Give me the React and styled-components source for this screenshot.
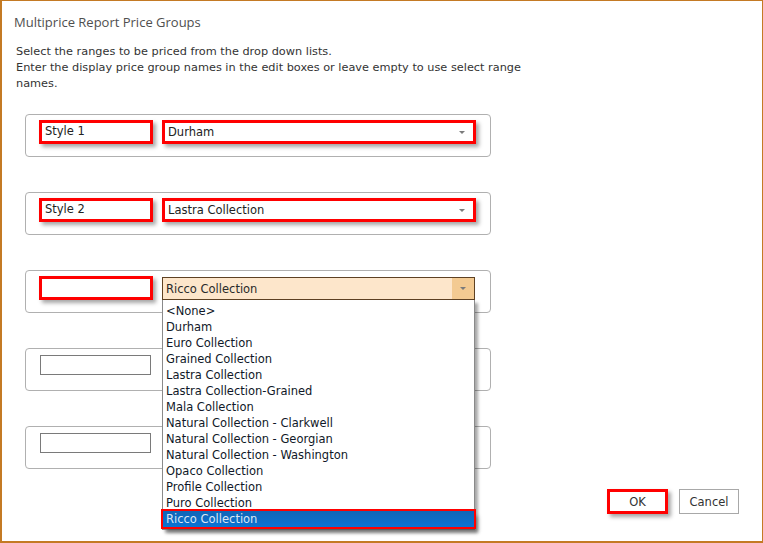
import React from "react"
import styled, { createGlobalStyle } from "styled-components"

const GlobalStyle = createGlobalStyle`
    html, body {
        margin: 0;
        padding: 0;
        background: #fff;
    }
    body {
        font-family: "DejaVu Sans", "Liberation Sans", sans-serif;
        font-size: 11.5px;
        color: #222;
    }
`

const Dialog = styled.div`
    position: relative;
    box-sizing: border-box;
    width: 763px;
    height: 543px;
    border-style: solid;
    border-color: #c47a24;
    border-width: 1px 1px 2px 2px;
    padding: 13px 0 0 12px;
    display: flex;
    flex-direction: column;
    background: #fff;
`

const Title = styled.div`
    font-family: "Open Sans", "DejaVu Sans", sans-serif;
    font-size: 13px;
    line-height: 16px;
    color: #4f4f4f;
`

const Instructions = styled.div`
    margin: 14px 0 22px 2px;
    font-size: 11.3px;
    color: #333;
    line-height: 16px;
`

const Line = styled.div``

const Groups = styled.div`
    display: flex;
    flex-direction: column;
    gap: 35px;
    margin-left: 11px;
`

const GroupBox = styled.div`
    position: relative;
    box-sizing: border-box;
    width: 466px;
    height: 43px;
    border: 1px solid #b0b0b0;
    border-radius: 4px;
    padding: 5px 0 0 13px;
    display: flex;
    align-items: flex-start;
    gap: 9px;
`

const Highlight = styled.div`
    box-sizing: border-box;
    width: ${(p) => p.$w}px;
    height: 24px;
    border: 3px solid #ff0000;
    box-shadow: 3px 3px 4px rgba(0, 0, 0, 0.35);
    display: flex;
    align-items: center;
    background: #fff;
`

const NameInput = styled.div`
    box-sizing: border-box;
    width: 111px;
    height: 20px;
    margin: 1px 0 0 1px;
    border: 1px solid #7a7a7a;
    background: #fff;
`

const FieldText = styled.span`
    padding: 0 0 ${(p) => (p.$raised ? 3 : 0)}px 3px;
    color: #222;
    white-space: nowrap;
`

const Combo = styled.div`
    flex: 1;
    height: 100%;
    display: flex;
    align-items: center;
    justify-content: space-between;
    padding-right: 8px;
`

const Arrow = styled.span`
    width: 0;
    height: 0;
    border-left: 3px solid transparent;
    border-right: 3px solid transparent;
    border-top: 3px solid #7b7b7b;
`

const FocusCombo = styled.div`
    position: relative;
    box-sizing: border-box;
    width: 313px;
    height: 23px;
    margin-top: 1px;
    border: 1px solid #5e4123;
    background: #fde6cb;
    display: flex;
    align-items: stretch;
    justify-content: space-between;
`

const FocusText = styled.span`
    align-self: center;
    padding-left: 3px;
    color: #2a2a2a;
`

const DropButton = styled.div`
    width: 22px;
    background: #f3ca92;
    display: flex;
    align-items: center;
    justify-content: center;
`

const DropList = styled.div`
    position: absolute;
    top: 22px;
    left: -1px;
    z-index: 5;
    box-sizing: border-box;
    width: 313px;
    height: 230px;
    background: #fff;
    border: 1px solid #8a8a8a;
    border-top: none;
    box-shadow: 3px 3px 3px rgba(0, 0, 0, 0.35);
    padding-top: 3px;
`

const Item = styled.div`
    position: relative;
    height: 16px;
    line-height: 16px;
    padding-left: 3px;
    color: ${(p) => (p.$selected ? "#dbe6f2" : "#101828")};
    background: ${(p) =>
        p.$selected ? "linear-gradient(#1165b6, #0a73d4)" : "transparent"};
    box-shadow: ${(p) =>
        p.$selected
            ? "0 0 0 2px #ff0000, 4px 5px 4px rgba(0, 0, 0, 0.35)"
            : "none"};
    white-space: nowrap;
`

const Footer = styled.div`
    display: flex;
    justify-content: flex-end;
    gap: 11px;
    margin-top: 20px;
    padding-right: 23px;
`

const Button = styled.button`
    box-sizing: border-box;
    width: ${(p) => p.$w}px;
    height: 25px;
    padding: 0;
    background: #fff;
    font-family: "DejaVu Sans", sans-serif;
    font-size: 11.5px;
    color: #333;
    border: ${(p) => (p.$highlight ? "3px solid #ff0000" : "1px solid #a8a8a8")};
    box-shadow: ${(p) =>
        p.$highlight ? "3px 3px 4px rgba(0, 0, 0, 0.35)" : "none"};
`

const ranges = [
    "<None>",
    "Durham",
    "Euro Collection",
    "Grained Collection",
    "Lastra Collection",
    "Lastra Collection-Grained",
    "Mala Collection",
    "Natural Collection - Clarkwell",
    "Natural Collection - Georgian",
    "Natural Collection - Washington",
    "Opaco Collection",
    "Profile Collection",
    "Puro Collection",
    "Ricco Collection",
]

const HighlightedRow = ({ name, range }) => (
    <GroupBox>
        <Highlight $w={114}>
            <FieldText $raised>{name}</FieldText>
        </Highlight>
        <Highlight $w={314}>
            <Combo>
                <FieldText>{range}</FieldText>
                <Arrow />
            </Combo>
        </Highlight>
    </GroupBox>
)

const App = () => {
    return (
        <>
            <GlobalStyle />
            <Dialog>
                <Title>Multiprice Report Price Groups</Title>
                <Instructions>
                    <Line>Select the ranges to be priced from the drop down lists.</Line>
                    <Line>Enter the display price group names in the edit boxes or leave empty to use select range</Line>
                    <Line>names.</Line>
                </Instructions>
                <Groups>
                    <HighlightedRow name="Style 1" range="Durham" />
                    <HighlightedRow name="Style 2" range="Lastra Collection" />
                    <GroupBox style={{ zIndex: 2 }}>
                        <Highlight $w={114} />
                        <FocusCombo>
                            <FocusText>Ricco Collection</FocusText>
                            <DropButton>
                                <Arrow />
                            </DropButton>
                            <DropList>
                                {ranges.map((r) => (
                                    <Item key={r} $selected={r === "Ricco Collection"}>
                                        {r}
                                    </Item>
                                ))}
                            </DropList>
                        </FocusCombo>
                    </GroupBox>
                    <GroupBox>
                        <NameInput />
                    </GroupBox>
                    <GroupBox>
                        <NameInput />
                    </GroupBox>
                </Groups>
                <Footer>
                    <Button $w={61} $highlight>OK</Button>
                    <Button $w={60}>Cancel</Button>
                </Footer>
            </Dialog>
        </>
    )
}

export default App
